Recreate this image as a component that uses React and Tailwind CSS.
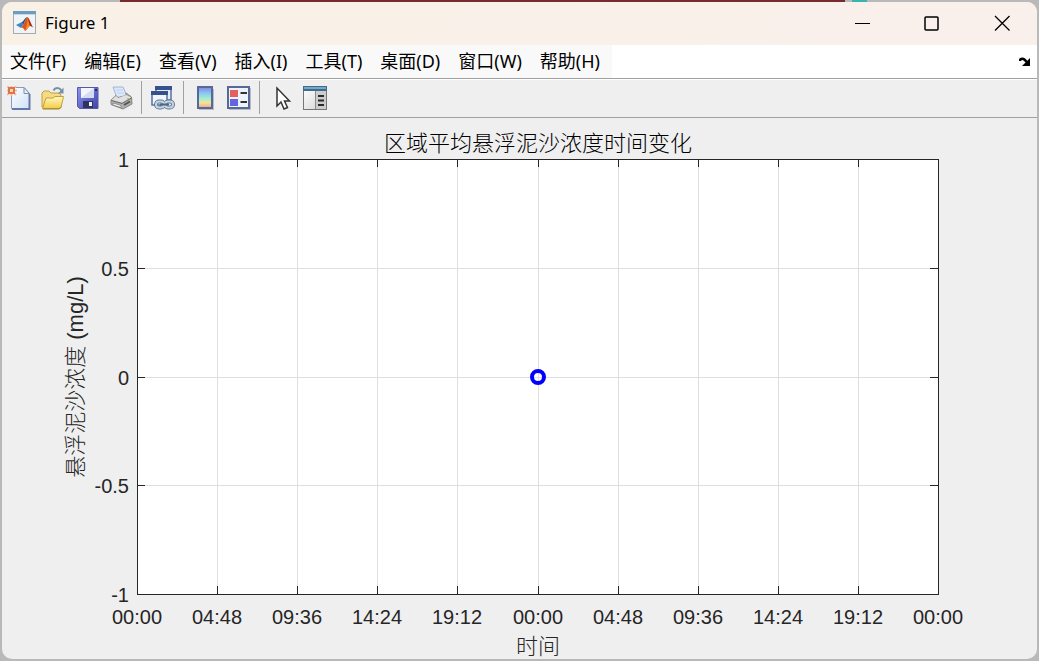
/**
 * Figure window
 *
 * Title bar, menu bar, icon toolbar and one time-series plot.
 */

const MENUS = ['文件(F)', '编辑(E)', '查看(V)', '插入(I)', '工具(T)', '桌面(D)', '窗口(W)', '帮助(H)'];

const X_LABELS = ['00:00', '04:48', '09:36', '14:24', '19:12', '00:00', '04:48', '09:36', '14:24', '19:12', '00:00'];
const Y_LABELS = ['1', '0.5', '0', '-0.5', '-1'];

// Axes box inside the figure canvas
const BOX = { left: 135, top: 41, width: 801, height: 435 };
const TICK = 8;

function FigureLogo() {
    return (
        <svg width="24" height="24" viewBox="0 0 24 24" aria-hidden="true">
            <rect x="0.5" y="0.5" width="22" height="22" fill="#f1f4f6" stroke="#a3abb3" />
            <rect x="0" y="0" width="23" height="3" fill="#6b9cc2" />
            <rect x="1" y="3" width="21" height="1" fill="#c3d9e8" />
            <path d="M3 14 L8 11.5 L10.5 13.5 L8 17 Z" fill="#3f86bd" />
            <path d="M8 11.5 C10.5 11 11.5 7 14 6 L10.5 13.5 Z" fill="#225a8c" />
            <path d="M14 6 C12 9 11.5 13 8 17 C10 16 11 18 12 20 C14.500 19 15 15.500 17 15 C18.500 14.700 19.500 16 20.500 17 C18 13 16.500 6.500 14 6 Z" fill="#d9541e" />
            <path d="M14 6 C15.500 9 14 13 12 20 C14.500 19 15 15.500 17 15 C16 12 15.500 7 14 6 Z" fill="#f08a28" />
            <path d="M14 6 C16.500 8 17 13 20.500 17 C19.500 16 18.500 14.700 17 15 C16 12 15.500 8 14 6 Z" fill="#9c2714" />
        </svg>
    );
}

function NewIcon() {
    return (
        <svg width="24" height="24" viewBox="0 0 24 24" aria-hidden="true">
            <defs>
                <linearGradient id="page" x1="0" y1="0" x2="1" y2="1">
                    <stop offset="0" stopColor="#ffffff" />
                    <stop offset="1" stopColor="#cfe1f8" />
                </linearGradient>
            </defs>
            <path d="M4.500 1.500 H17 L22.500 7.500 V22.500 H4.500 Z" fill="url(#page)" stroke="#8c9bbd" />
            <path d="M22.500 8 V23 H5" fill="none" stroke="#6478a8" strokeWidth="2" />
            <path d="M17 1.500 V7.500 H22.500 Z" fill="#e5edf9" stroke="#7c8db5" />
            <path d="M0 0 L9 9 M9 0 L0 9 M4.500 0 V10 M0 4.500 H10" stroke="#f4bd9c" strokeWidth="2" />
            <rect x="2" y="2" width="5" height="5" fill="#fbd8a0" stroke="#de7350" strokeWidth="2" />
        </svg>
    );
}

function OpenIcon() {
    return (
        <svg width="24" height="24" viewBox="0 0 24 24" aria-hidden="true">
            <defs>
                <linearGradient id="folder" x1="0" y1="0" x2="0" y2="1">
                    <stop offset="0" stopColor="#fff9c4" />
                    <stop offset="1" stopColor="#f2cd45" />
                </linearGradient>
            </defs>
            <path d="M1 21 V7 L3 5 H8 L10 7 H18 L20 9 V20 Z" fill="#f3dc85" stroke="#c79e3a" />
            <path d="M5 12 H12 L14 10.500 H22.500 L20 21.500 L18 22.500 H1.500 Z" fill="url(#folder)" stroke="#c79e3a" />
            <path d="M2 23 H18 L20.500 21" fill="none" stroke="#a2802c" />
            <path d="M12.500 4.500 C14 1.500 18 1 20.500 4.500" fill="none" stroke="#7690a6" strokeWidth="2" />
            <path d="M22.500 1.500 V7.500 H17 Z" fill="#7690a6" />
        </svg>
    );
}

function SaveIcon() {
    return (
        <svg width="24" height="24" viewBox="0 0 24 24" aria-hidden="true">
            <defs>
                <linearGradient id="disk" x1="0" y1="0" x2="1" y2="1">
                    <stop offset="0" stopColor="#8f96ee" />
                    <stop offset="1" stopColor="#3d42a8" />
                </linearGradient>
            </defs>
            <path d="M2.500 1.500 H23 V22.500 H4.500 L2.500 20.500 Z" fill="url(#disk)" stroke="#5659a8" />
            <rect x="6" y="2" width="13" height="10" fill="#f3f6fd" />
            <path d="M6 12 L19 2 V12 Z" fill="#d3dcf2" />
            <rect x="20" y="3" width="2" height="2" fill="#23266b" />
            <rect x="8" y="15" width="10" height="7" fill="#303263" />
            <rect x="14" y="16" width="3" height="4" fill="#f1f1f6" />
        </svg>
    );
}

function PrintIcon() {
    return (
        <svg width="24" height="24" viewBox="0 0 24 24" aria-hidden="true">
            <path d="M4 1 H14 L18 10 L8 12 Z" fill="#dbe8fa" stroke="#a3b4d3" />
            <path d="M7 4 H14 M8 7 H15" stroke="#c3d2ee" />
            <path d="M2 14 L7 9.500 L9 11.500 L17 9.500 V7 L22.500 11 L23 18 L14 23 L2 18.500 Z" fill="#b0b0b0" stroke="#858585" />
            <path d="M2.500 14 L7 10 L9 12 L17 9 L22 11.500 L13 16.500 Z" fill="#e0e0e0" />
            <path d="M2.500 14.500 L13 17.500 L22.500 12" fill="none" stroke="#6d6d6d" />
            <path d="M4 17 L12 19.500 V21.500 L4 19 Z" fill="#f7f7f7" stroke="#5d5d5d" strokeWidth="0.500" />
            <path d="M15 19 L21 15.500" stroke="#555555" strokeWidth="2" />
            <rect x="18" y="12" width="3" height="1" fill="#a6cf59" />
        </svg>
    );
}

function LinkIcon() {
    return (
        <svg width="24" height="24" viewBox="0 0 24 24" aria-hidden="true">
            <rect x="5" y="1" width="15" height="13" fill="#e5edf8" stroke="#5a70a3" strokeWidth="1.500" />
            <rect x="4" y="0" width="17" height="4" fill="#36528e" />
            <rect x="1" y="6" width="15" height="13" fill="#f1f6fc" stroke="#5a70a3" strokeWidth="1.500" />
            <rect x="0" y="5" width="17" height="4" fill="#36528e" />
            <g fill="none" stroke="#64798f" strokeWidth="4">
                <rect x="5" y="15.500" width="8" height="6" rx="3" />
                <rect x="14" y="15.500" width="8" height="6" rx="3" />
            </g>
            <g fill="none" stroke="#c3d5e7" strokeWidth="2">
                <rect x="5" y="15.500" width="8" height="6" rx="3" />
                <rect x="14" y="15.500" width="8" height="6" rx="3" />
            </g>
            <path d="M9 18.500 H18" stroke="#50677f" strokeWidth="2" />
        </svg>
    );
}

function ColorbarIcon() {
    return (
        <svg width="24" height="24" viewBox="0 0 24 24" aria-hidden="true">
            <defs>
                <linearGradient id="bar" x1="0" y1="0" x2="0" y2="1">
                    <stop offset="0" stopColor="#8d7fe0" />
                    <stop offset="0.300" stopColor="#86c9f3" />
                    <stop offset="0.550" stopColor="#a5ecd1" />
                    <stop offset="0.750" stopColor="#f4e497" />
                    <stop offset="1" stopColor="#f3a291" />
                </linearGradient>
            </defs>
            <path d="M6 24 H20 V3" fill="none" stroke="#b9bcc4" strokeWidth="2" />
            <rect x="5" y="1" width="14" height="21" fill="url(#bar)" stroke="#566a99" strokeWidth="2" />
        </svg>
    );
}

function LegendIcon() {
    return (
        <svg width="24" height="24" viewBox="0 0 24 24" aria-hidden="true">
            <path d="M2 23.500 H23.500 V2" fill="none" stroke="#b9bcc4" />
            <rect x="1" y="1" width="21" height="21" fill="#edf2fb" stroke="#566a99" strokeWidth="2" />
            <rect x="3" y="4" width="8" height="7" fill="#e4605f" />
            <rect x="3" y="13" width="8" height="7" fill="#6464e2" />
            <path d="M13.500 7 H20 M13.500 16 H20" stroke="#333333" strokeWidth="2" />
        </svg>
    );
}

function PointerIcon() {
    return (
        <svg width="24" height="24" viewBox="0 0 24 24" aria-hidden="true">
            <path d="M8 2 V20 L12 16 L15 23 L18.500 21.500 L15.500 15 H20.500 Z" fill="#ffffff" stroke="#333333" strokeWidth="1.500" />
        </svg>
    );
}

function InspectorIcon() {
    return (
        <svg width="24" height="24" viewBox="0 0 24 24" aria-hidden="true">
            <defs>
                <linearGradient id="pane" x1="0" y1="0" x2="1" y2="1">
                    <stop offset="0" stopColor="#ffffff" />
                    <stop offset="1" stopColor="#d2d2d2" />
                </linearGradient>
            </defs>
            <rect x="0.500" y="0.500" width="23" height="23" fill="url(#pane)" stroke="#73777c" />
            <rect x="13" y="5" width="10" height="18" fill="#cccccc" />
            <rect x="12" y="5" width="1" height="18" fill="#8c8c8c" />
            <rect x="0" y="0" width="24" height="5" fill="#3f6c8c" />
            <rect x="1" y="1" width="22" height="2" fill="#75a9c7" />
            <path d="M15 10 H21 M15 14.500 H21 M15 19 H21" stroke="#2a2a2a" strokeWidth="2" />
        </svg>
    );
}

const TOOL_GROUPS = [
    [
        { label: '新建图窗', Icon: NewIcon },
        { label: '打开文件', Icon: OpenIcon },
        { label: '保存图窗', Icon: SaveIcon },
        { label: '打印图窗', Icon: PrintIcon },
    ],
    [{ label: '链接绘图', Icon: LinkIcon }],
    [
        { label: '插入颜色栏', Icon: ColorbarIcon },
        { label: '插入图例', Icon: LegendIcon },
    ],
    [
        { label: '编辑绘图', Icon: PointerIcon },
        { label: '打开属性检查器', Icon: InspectorIcon },
    ],
];

function TitleBar() {
    return (
        <header className="flex h-[43px] shrink-0 items-center bg-linear-to-r from-[#f9f1e6] to-[#f9f0ec] pb-0.5 pl-[11px] text-black">
            <FigureLogo />
            <h1 className="ml-2 text-[17px]">Figure 1</h1>
            <div className="ml-auto flex h-full">
                <button type="button" aria-label="最小化" className="flex w-[70px] items-center justify-center">
                    <svg width="16" height="16" viewBox="0 0 16 16"><path d="M1 8.500 H16" stroke="#000" /></svg>
                </button>
                <button type="button" aria-label="最大化" className="flex w-[70px] items-center justify-center">
                    <svg width="16" height="16" viewBox="0 0 16 16">
                        <rect x="1" y="2" width="13" height="13" rx="1" fill="none" stroke="#000" strokeWidth="1.500" />
                    </svg>
                </button>
                <button type="button" aria-label="关闭" className="flex w-[70px] items-center justify-center">
                    <svg width="16" height="16" viewBox="0 0 16 16">
                        <path d="M1 1 L15.500 15.500 M15.500 1 L1 15.500" stroke="#000" strokeWidth="1.300" />
                    </svg>
                </button>
            </div>
        </header>
    );
}

function MenuBar() {
    return (
        <nav className="flex h-[34px] shrink-0 items-stretch border-b border-[#a0a0a0] bg-white">
            <div className="flex gap-[18px] bg-[#f9f9f9] pr-3 pl-2">
                {MENUS.map((name) => (
                    <button key={name} type="button" className="text-[18px] whitespace-nowrap text-black">
                        {name}
                    </button>
                ))}
            </div>
            <button type="button" aria-label="停靠图窗" className="ml-auto pr-1.5">
                <svg width="12" height="10" viewBox="0 0 12 10">
                    <path d="M1 4 C1 1 5 0.500 7.500 5" fill="none" stroke="#000" strokeWidth="2.500" />
                    <path d="M11 1 V9 H3 Z" fill="#000" />
                </svg>
            </button>
        </nav>
    );
}

function Toolbar() {
    return (
        <div role="toolbar" className="flex h-[39px] shrink-0 items-center border-t border-b border-t-white border-b-[#a0a0a0] pb-0.5 pl-[5px]">
            {TOOL_GROUPS.map((group, index) => (
                <div key={index} className="flex items-center">
                    {index > 0 && <div className="mr-[9px] ml-2 h-[33px] w-px bg-[#a0a0a0]" />}
                    <div className="flex gap-[10px]">
                        {group.map(({ label, Icon }) => (
                            <button key={label} type="button" aria-label={label}>
                                <Icon />
                            </button>
                        ))}
                    </div>
                </div>
            ))}
        </div>
    );
}

function Plot() {
    const right = BOX.left + BOX.width;
    const bottom = BOX.top + BOX.height;
    const xs = X_LABELS.map((_, i) => Math.round(BOX.left + (i * BOX.width) / (X_LABELS.length - 1)));
    const ys = Y_LABELS.map((_, i) => Math.round(BOX.top + (i * BOX.height) / (Y_LABELS.length - 1)));

    return (
        <svg viewBox="0 0 1035 541" className="block min-h-0 w-full flex-1 font-['Liberation_Sans','Noto_Sans_CJK_SC',sans-serif]">
            <rect x={BOX.left} y={BOX.top} width={BOX.width} height={BOX.height} fill="#ffffff" />

            {/* Grid */}
            <g fill="#dfdfdf" shapeRendering="crispEdges">
                {xs.map((x) => <rect key={x} x={x} y={BOX.top} width="1" height={BOX.height} />)}
                {ys.map((y) => <rect key={y} x={BOX.left} y={y} width={BOX.width} height="1" />)}
            </g>

            {/* Axes box and ticks on all four sides */}
            <g fill="#262626" shapeRendering="crispEdges">
                {xs.map((x) => (
                    <g key={x}>
                        <rect x={x} y={BOX.top} width="1" height={TICK} />
                        <rect x={x} y={bottom - TICK} width="1" height={TICK} />
                    </g>
                ))}
                {ys.map((y) => (
                    <g key={y}>
                        <rect x={BOX.left} y={y} width={TICK} height="1" />
                        <rect x={right - TICK} y={y} width={TICK} height="1" />
                    </g>
                ))}
                <rect x={BOX.left} y={BOX.top} width={BOX.width + 1} height="1" />
                <rect x={BOX.left} y={bottom} width={BOX.width + 1} height="1" />
                <rect x={BOX.left} y={BOX.top} width="1" height={BOX.height} />
                <rect x={right} y={BOX.top} width="1" height={BOX.height} />
            </g>

            {/* Data */}
            <circle cx="536" cy="259" r="6" fill="none" stroke="#0000ff" strokeWidth="4" />

            {/* Labels */}
            <g fill="#262626" className="text-[20px]">
                {X_LABELS.map((label, i) => (
                    <text key={i} x={xs[i]} y={bottom + 30} textAnchor="middle">{label}</text>
                ))}
                {Y_LABELS.map((label, i) => (
                    <text key={label} x={BOX.left - 8} y={ys[i] + 8} textAnchor="end">{label}</text>
                ))}
            </g>
            <g fill="#262626" className="text-[22px] font-light" textAnchor="middle">
                <text x="536" y="33" fill="#000000">区域平均悬浮泥沙浓度时间变化</text>
                <text x="536" y="536">时间</text>
                <text transform="translate(81 259) rotate(-90)">悬浮泥沙浓度 (mg/L)</text>
            </g>
        </svg>
    );
}

function App() {
    return (
        <div className="flex h-screen flex-col overflow-hidden bg-[#b9b9b9] font-['Noto_Sans','Noto_Sans_CJK_SC',sans-serif]">
            {/* Strip of the desktop above the window */}
            <div className="flex h-0.5 shrink-0">
                <div className="w-[120px]" />
                <div className="mr-[7px] grow bg-[#762b2e]" />
                <div className="w-[15px] bg-[#39b5ac]" />
                <div className="w-[172px]" />
            </div>
            <main className="mx-0.5 mb-0.5 flex min-h-0 flex-1 flex-col overflow-hidden rounded-[10px] bg-[#efefef]">
                <TitleBar />
                <MenuBar />
                <Toolbar />
                <Plot />
            </main>
        </div>
    );
}

export default App;
